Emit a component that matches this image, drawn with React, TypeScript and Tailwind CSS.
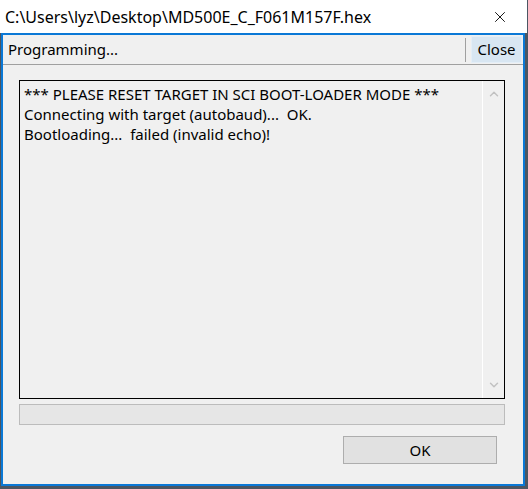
import { X, ChevronUp, ChevronDown } from "lucide-react";

const logLines = [
  "*** PLEASE RESET TARGET IN SCI BOOT-LOADER MODE ***",
  "Connecting with target (autobaud)...  OK.",
  "Bootloading...  failed (invalid echo)!",
];

export default function App() {
  return (
    <div
      className="w-[528px] h-[489px] bg-[#4b5663] overflow-hidden text-[#000]"
      style={{ fontFamily: '"Noto Sans", "Open Sans", sans-serif' }}
    >
      {/* title bar */}
      <div className="h-[33px] bg-white flex items-center justify-between pl-[5px] pr-[18px] mr-[1px]">
        <span className="text-[16px] leading-none whitespace-nowrap">
          C:\Users\lyz\Desktop\MD500E_C_F061M157F.hex
        </span>
        <X className="w-[18px] h-[18px] text-black" strokeWidth={1.2} />
      </div>

      {/* dialog frame */}
      <div className="ml-[1px] w-[524px] h-[453px] border-2 border-[#0a78d6] bg-[#f0f0f0] flex flex-col">
        {/* toolbar */}
        <div className="h-[30px] border-b border-[#a0a0a0] flex items-center">
          <span className="pl-[5px] text-[15px] flex-1 whitespace-nowrap">Programming...</span>
          <div className="w-[1px] h-[24px] bg-[#a0a0a0] mr-[5px]" />
          <div className="w-[51px] h-[27px] bg-[#d8e6f2] border border-[#e4eef7] flex items-center justify-center text-[15px] mr-[1px]">
            Close
          </div>
        </div>

        {/* log box */}
        <div className="ml-[16px] mt-[15px] w-[486px] h-[319px] border border-black flex">
          <div className="flex-1 pl-[4px] pt-[3px] text-[15px] leading-[20px]">
            {logLines.map((l) => (
              <div key={l} className="whitespace-pre">
                {l}
              </div>
            ))}
          </div>
          <div className="w-[22px] border-l border-white flex flex-col items-center justify-between py-[6px]">
            <ChevronUp className="w-[14px] h-[14px] text-[#c2c2c2]" strokeWidth={2.5} />
            <ChevronDown className="w-[14px] h-[14px] text-[#c2c2c2]" strokeWidth={2.5} />
          </div>
        </div>

        {/* progress bar */}
        <div className="ml-[16px] mt-[5px] w-[486px] h-[21px] bg-[#e6e6e6] border border-[#bcbcbc]" />

        {/* OK button */}
        <div className="ml-[340px] mt-[11px] w-[154px] h-[28px] bg-[#e1e1e1] border border-[#adadad] flex items-center justify-center text-[15px]">
          OK
        </div>
      </div>
    </div>
  );
}
